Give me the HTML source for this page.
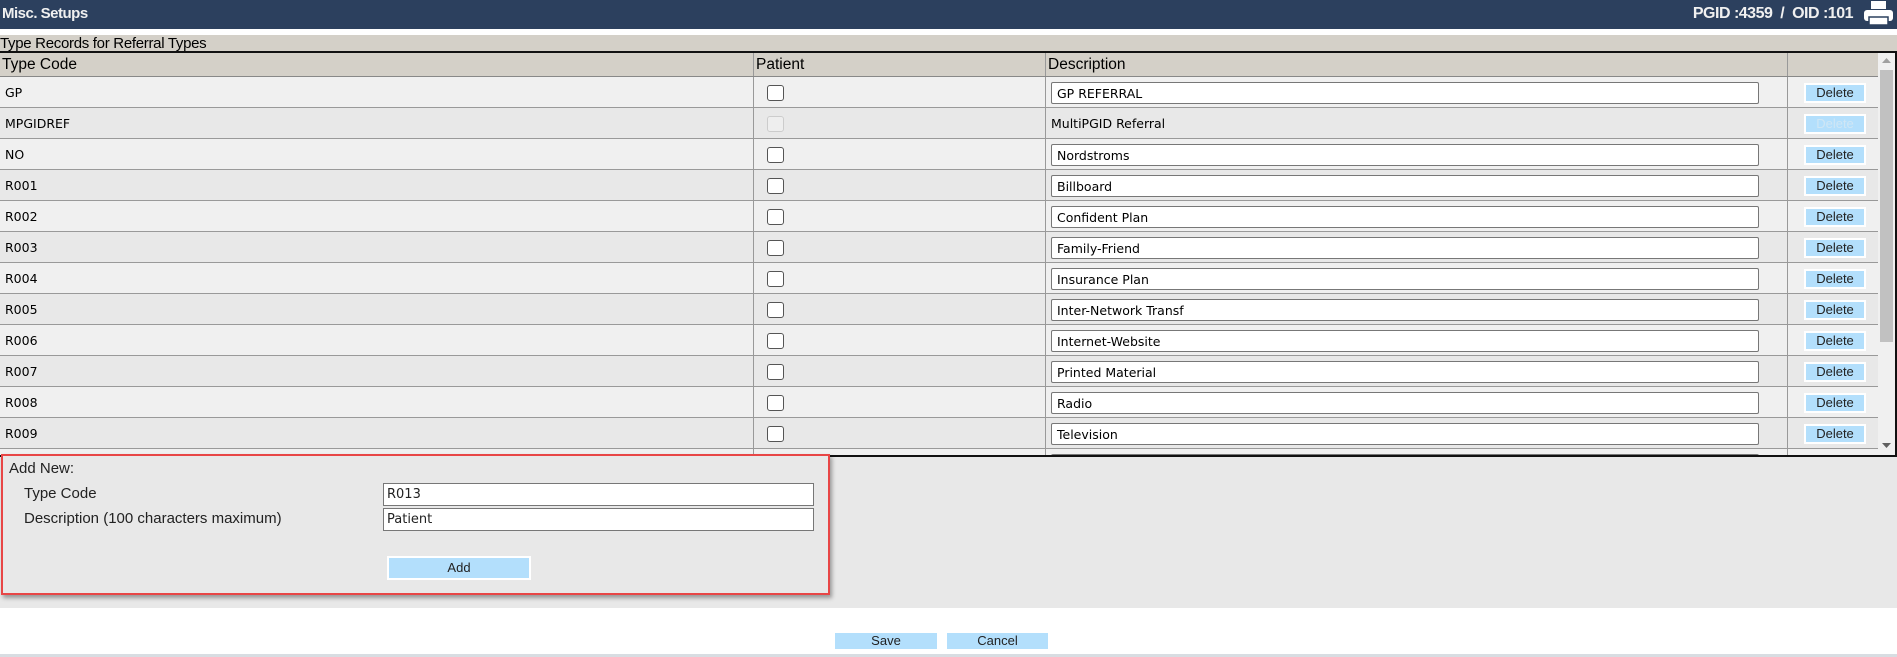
<!DOCTYPE html>
<html><head><style>
*{box-sizing:border-box;margin:0;padding:0}
body{width:1897px;height:657px;background:#fff;font-family:"Liberation Sans",Arial,sans-serif;position:relative;overflow:hidden}
.top{position:absolute;left:0;top:0;width:1897px;height:29px;background:#2c405e;color:#f0f0f0;font-weight:bold;font-size:15px;letter-spacing:-0.5px}
.top .l{position:absolute;left:2px;top:5px}
.top .r{position:absolute;right:44px;top:5px;font-size:16px}
.title{position:absolute;left:0;top:35px;width:1897px;height:18px;background:#d4d0c8;font-size:15px;line-height:18px;letter-spacing:-0.3px;border-bottom:2px solid #111}
.grid{position:absolute;left:0;top:53px;width:1897px;height:404px;background:#e8e8e8;border-right:2px solid #111;border-bottom:2px solid #111;overflow:hidden}
.row{position:absolute;left:0;width:1878px;height:31px;border-bottom:1px solid #999;font-family:"DejaVu Sans",Verdana,sans-serif;font-size:12.5px;white-space:nowrap}
.hdr{height:24px;background:#d4d0c8;font-family:"Liberation Sans",Arial,sans-serif;font-size:15.5px;border-bottom:1px solid #888}
.c{position:absolute;top:0;height:100%;border-left:1px solid #999}
.t{position:absolute;left:5px;top:8px;white-space:nowrap}
.hdr .t{top:3px;left:2px}
.cb{position:absolute;left:13px;top:8px;width:17px;height:16px;border:1px solid #555;border-radius:3px;background:#fff}
.cb.d{border-color:#ccc;background:#eee}
.inp{position:absolute;left:5px;top:5px;width:708px;height:22px;border:1px solid #777;border-radius:2px;background:#fff;padding:3px 5px;font-size:12.5px}
.del{position:absolute;left:16px;top:6px;width:62px;height:20px;background:#b3dffc;border:2px solid #fff;font-family:"Liberation Sans",Arial,sans-serif;font-size:13px;text-align:center;line-height:16px;color:#222}
.del.d{color:#cfe6f5}
.sb{position:absolute;left:1878px;top:0;width:17px;height:404px;background:#f0f0f0}
.box{position:absolute;left:1px;top:454px;width:829px;height:141px;border:2px solid #e84646;background:#e8e8e8;box-shadow:2px 3px 4px rgba(0,0,0,.35);font-size:15px;color:#222}
.ti{position:absolute;width:431px;height:23px;border:1px solid #777;background:#fff;font-family:"DejaVu Sans",sans-serif;font-size:13px;padding:3px 3px}
.btn{position:absolute;background:#b3dffc;border:2px solid #fff;text-align:center;font-size:13px;color:#222}
</style></head><body>
<div class="top"><span class="l">Misc. Setups</span><span class="r">PGID :4359 &nbsp;/ &nbsp;OID :101</span>
<svg style="position:absolute;right:3px;top:1px" width="31" height="26" viewBox="0 0 31 26"><rect x="8" y="0" width="15" height="8" fill="#fff"/><rect x="1" y="9" width="29" height="11" rx="3" fill="#fff"/><rect x="6" y="16" width="19" height="8" fill="#fff" stroke="#2c405e" stroke-width="1.5"/></svg></div>
<div class="title">Type Records for Referral Types</div>
<div class="grid">
<div class="row hdr" style="top:0"><span class="t">Type Code</span><div class="c" style="left:753px"><span class="t">Patient</span></div><div class="c" style="left:1045px"><span class="t">Description</span></div><div class="c" style="left:1787px"></div></div>
<div style="position:absolute;top:24px;left:0">
<div class="row" style="top:0;background:#f0f0f0"><span class="t">GP</span><div class="c" style="left:753px"><span class="cb"></span></div><div class="c" style="left:1045px"><span class="inp">GP REFERRAL</span></div><div class="c" style="left:1787px"><span class="del">Delete</span></div></div>
<div class="row" style="top:31px"><span class="t">MPGIDREF</span><div class="c" style="left:753px"><span class="cb d"></span></div><div class="c" style="left:1045px"><span class="t">MultiPGID Referral</span></div><div class="c" style="left:1787px"><span class="del d">Delete</span></div></div>
<div class="row" style="top:62px;background:#f0f0f0"><span class="t">NO</span><div class="c" style="left:753px"><span class="cb"></span></div><div class="c" style="left:1045px"><span class="inp">Nordstroms</span></div><div class="c" style="left:1787px"><span class="del">Delete</span></div></div>
<div class="row" style="top:93px"><span class="t">R001</span><div class="c" style="left:753px"><span class="cb"></span></div><div class="c" style="left:1045px"><span class="inp">Billboard</span></div><div class="c" style="left:1787px"><span class="del">Delete</span></div></div>
<div class="row" style="top:124px;background:#f0f0f0"><span class="t">R002</span><div class="c" style="left:753px"><span class="cb"></span></div><div class="c" style="left:1045px"><span class="inp">Confident Plan</span></div><div class="c" style="left:1787px"><span class="del">Delete</span></div></div>
<div class="row" style="top:155px"><span class="t">R003</span><div class="c" style="left:753px"><span class="cb"></span></div><div class="c" style="left:1045px"><span class="inp">Family-Friend</span></div><div class="c" style="left:1787px"><span class="del">Delete</span></div></div>
<div class="row" style="top:186px;background:#f0f0f0"><span class="t">R004</span><div class="c" style="left:753px"><span class="cb"></span></div><div class="c" style="left:1045px"><span class="inp">Insurance Plan</span></div><div class="c" style="left:1787px"><span class="del">Delete</span></div></div>
<div class="row" style="top:217px"><span class="t">R005</span><div class="c" style="left:753px"><span class="cb"></span></div><div class="c" style="left:1045px"><span class="inp">Inter-Network Transf</span></div><div class="c" style="left:1787px"><span class="del">Delete</span></div></div>
<div class="row" style="top:248px;background:#f0f0f0"><span class="t">R006</span><div class="c" style="left:753px"><span class="cb"></span></div><div class="c" style="left:1045px"><span class="inp">Internet-Website</span></div><div class="c" style="left:1787px"><span class="del">Delete</span></div></div>
<div class="row" style="top:279px"><span class="t">R007</span><div class="c" style="left:753px"><span class="cb"></span></div><div class="c" style="left:1045px"><span class="inp">Printed Material</span></div><div class="c" style="left:1787px"><span class="del">Delete</span></div></div>
<div class="row" style="top:310px;background:#f0f0f0"><span class="t">R008</span><div class="c" style="left:753px"><span class="cb"></span></div><div class="c" style="left:1045px"><span class="inp">Radio</span></div><div class="c" style="left:1787px"><span class="del">Delete</span></div></div>
<div class="row" style="top:341px"><span class="t">R009</span><div class="c" style="left:753px"><span class="cb"></span></div><div class="c" style="left:1045px"><span class="inp">Television</span></div><div class="c" style="left:1787px"><span class="del">Delete</span></div></div>
<div class="row" style="top:372px;background:#f0f0f0"><div class="c" style="left:753px"></div><div class="c" style="left:1045px"><span class="inp"></span></div><div class="c" style="left:1787px"></div></div>
</div>
<div class="sb"><div style="position:absolute;left:2px;top:17px;width:13px;height:272px;background:#c1c1c1"></div>
<svg style="position:absolute;left:4px;top:5px" width="9" height="6"><path d="M0 5L4.5 0L9 5Z" fill="#a0a0a0"/></svg>
<svg style="position:absolute;left:4px;top:390px" width="9" height="6"><path d="M0 0L4.5 5L9 0Z" fill="#606060"/></svg></div>
</div>
<div style="position:absolute;left:0;top:457px;width:1897px;height:151px;background:#e8e8e8"></div>
<div class="box">
<div style="position:absolute;left:6px;top:4px">Add New:</div>
<div style="position:absolute;left:21px;top:29px">Type Code</div>
<div style="position:absolute;left:21px;top:54px">Description (100 characters maximum)</div>
<div class="ti" style="left:380px;top:27px">R013</div>
<div class="ti" style="left:380px;top:52px">Patient</div>
<div class="btn" style="left:384px;top:100px;width:144px;height:24px;line-height:20px">Add</div>
</div>
<div class="btn" style="left:833px;top:631px;width:106px;height:20px;line-height:16px">Save</div>
<div class="btn" style="left:945px;top:631px;width:105px;height:20px;line-height:16px">Cancel</div>
<div style="position:absolute;left:0;top:654px;width:1897px;height:3px;background:#d8dde2"></div>
</body></html>
